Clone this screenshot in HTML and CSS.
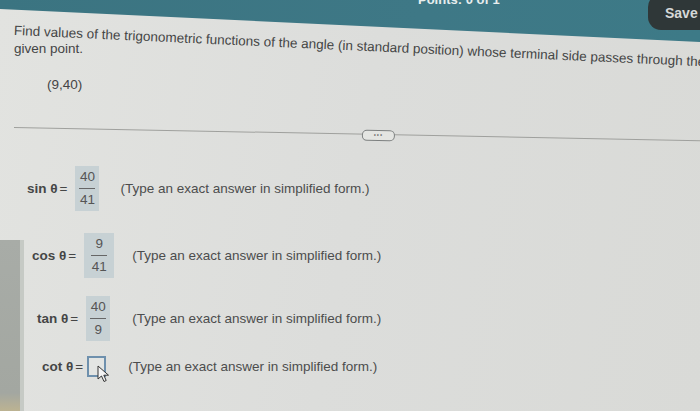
FILE: index.html
```html
<!DOCTYPE html>
<html>
<head>
<meta charset="utf-8">
<link rel="stylesheet" href="styles.css">
</head>
<body>
<div class="screen">
  <div class="topbar">
    <span class="points">Points: 0 of 1</span>
    <span class="save">Save</span>
  </div>
  <div class="edge"></div>
  <main class="content">
    <p class="prompt"><span class="line1">Find values of the trigonometric functions of the angle (in standard position) whose terminal side passes through the</span><br>given point.</p>
    <p class="point">(9,40)</p>
    <div class="divider"><span class="more">&bull;&bull;&bull;</span></div>
    <div class="rows">
      <div class="row r-sin">
        <span class="label">sin θ<span class="eq">=</span></span>
        <span class="frac"><span class="num">40</span><span class="den">41</span></span>
        <span class="hint">(Type an exact answer in simplified form.)</span>
      </div>
      <div class="row r-cos">
        <span class="label">cos θ<span class="eq">=</span></span>
        <span class="frac wide"><span class="num">9</span><span class="den">41</span></span>
        <span class="hint">(Type an exact answer in simplified form.)</span>
      </div>
      <div class="row r-tan">
        <span class="label">tan θ<span class="eq">=</span></span>
        <span class="frac"><span class="num">40</span><span class="den">9</span></span>
        <span class="hint">(Type an exact answer in simplified form.)</span>
      </div>
      <div class="row r-cot">
        <span class="label">cot θ<span class="eq">=</span></span>
        <span class="input">
          <svg class="cursor" width="14" height="18" viewBox="0 0 14 18"><path d="M1 1 L1 14 L4.5 11 L7 16.5 L9.2 15.5 L6.8 10.2 L11.5 10.2 Z" fill="#f4f4f4" stroke="#333" stroke-width="1" stroke-linejoin="round"/></svg>
        </span>
        <span class="hint">(Type an exact answer in simplified form.)</span>
      </div>
    </div>
  </main>
</div>
</body>
</html>
```

FILE: styles.css
```css
html, body {
  margin: 0;
  padding: 0;
}
body {
  width: 700px;
  height: 411px;
  overflow: hidden;
  font-family: "Liberation Sans", Arial, sans-serif;
}
.screen {
  position: relative;
  width: 700px;
  height: 411px;
  overflow: hidden;
  background: linear-gradient(100deg, #e2e3e0 0%, #dcdddb 50%, #d9dad7 100%);
}
.topbar {
  position: absolute;
  left: 0;
  top: 0;
  width: 700px;
  height: 44px;
  background: linear-gradient(90deg, #3b7481 0%, #3e7886 60%, #3d7a87 100%);
  clip-path: polygon(0 0, 100% 0, 100% 42px, 0 9px);
}
.points {
  position: absolute;
  left: 418px;
  top: -8px;
  color: #e8eeee;
  font-size: 13px;
  font-weight: bold;
}
.save {
  position: absolute;
  left: 648px;
  top: -6px;
  width: 70px;
  height: 36px;
  border-radius: 13px;
  background: #2f3738;
  color: #d5d8d8;
  font-size: 14px;
  font-weight: bold;
  box-sizing: border-box;
  padding: 11px 0 0 17px;
}
.edge {
  position: absolute;
  left: 0;
  top: 240px;
  width: 20px;
  height: 180px;
  background: linear-gradient(180deg, #a8aca7 0%, #a3a7a1 85%, #c9b98a 100%);
  border-right: 4px solid #c6cac5;
}
.content {
  padding: 22px 0 0 14px;
  color: #444545;
}
.prompt {
  margin: 0;
  font-size: 13.5px;
  line-height: 18px;
  letter-spacing: 0;
  white-space: nowrap;
}
.line1 {
  display: inline-block;
  transform: rotate(2.6deg);
  transform-origin: 0 50%;
}
.point {
  margin: 18px 0 0 33px;
  font-size: 13.5px;
  line-height: 18px;
}
.divider {
  margin-top: 33px;
  width: 700px;
  height: 0;
  border-top: 1px solid #9fa09d;
  transform: rotate(1.1deg);
  transform-origin: 0 0;
  position: relative;
}
.more {
  position: absolute;
  left: 348px;
  top: -5px;
  width: 31px;
  height: 9px;
  border: 1px solid #7d8080;
  border-radius: 5px;
  background: #e4e5e2;
  font-size: 6px;
  line-height: 9px;
  text-align: center;
  color: #555;
  letter-spacing: 1px;
}
.rows {
  display: flex;
  flex-direction: column;
}
.row {
  display: flex;
  align-items: center;
}
.label {
  font-size: 13.5px;
  font-weight: bold;
  color: #454646;
  white-space: nowrap;
}
.eq {
  font-weight: normal;
  margin-left: 2px;
}
.frac {
  display: flex;
  flex-direction: column;
  align-items: center;
  background: #c7d1d4;
  width: 24px;
  padding: 3px 0;
  margin-left: 8px;
  font-size: 13.5px;
  color: #555;
}
.frac.wide {
  width: 30px;
}
.num {
  line-height: 16px;
  padding-bottom: 3px;
}
.den {
  line-height: 16px;
  padding-top: 3px;
  border-top: 1px solid #666;
  width: 16px;
  text-align: center;
}
.hint {
  font-size: 13.5px;
  color: #4c4d4d;
  white-space: nowrap;
}
.r-sin {
  margin-top: 38px;
  padding-left: 13px;
}
.r-sin .hint { margin-left: 21px; }
.r-cos {
  margin-top: 22px;
  padding-left: 18px;
}
.r-cos .hint { margin-left: 18px; }
.r-tan {
  margin-top: 18px;
  padding-left: 23px;
}
.r-tan .hint { margin-left: 22px; }
.r-cot {
  margin-top: 15px;
  padding-left: 28px;
}
.r-cot .hint { margin-left: 22px; }
.input {
  position: relative;
  display: inline-block;
  width: 15px;
  height: 17px;
  border: 2px solid #6e90ad;
  margin-left: 4px;
  background: #e3e5e3;
}
.cursor {
  position: absolute;
  left: 8px;
  top: 7px;
}
```
